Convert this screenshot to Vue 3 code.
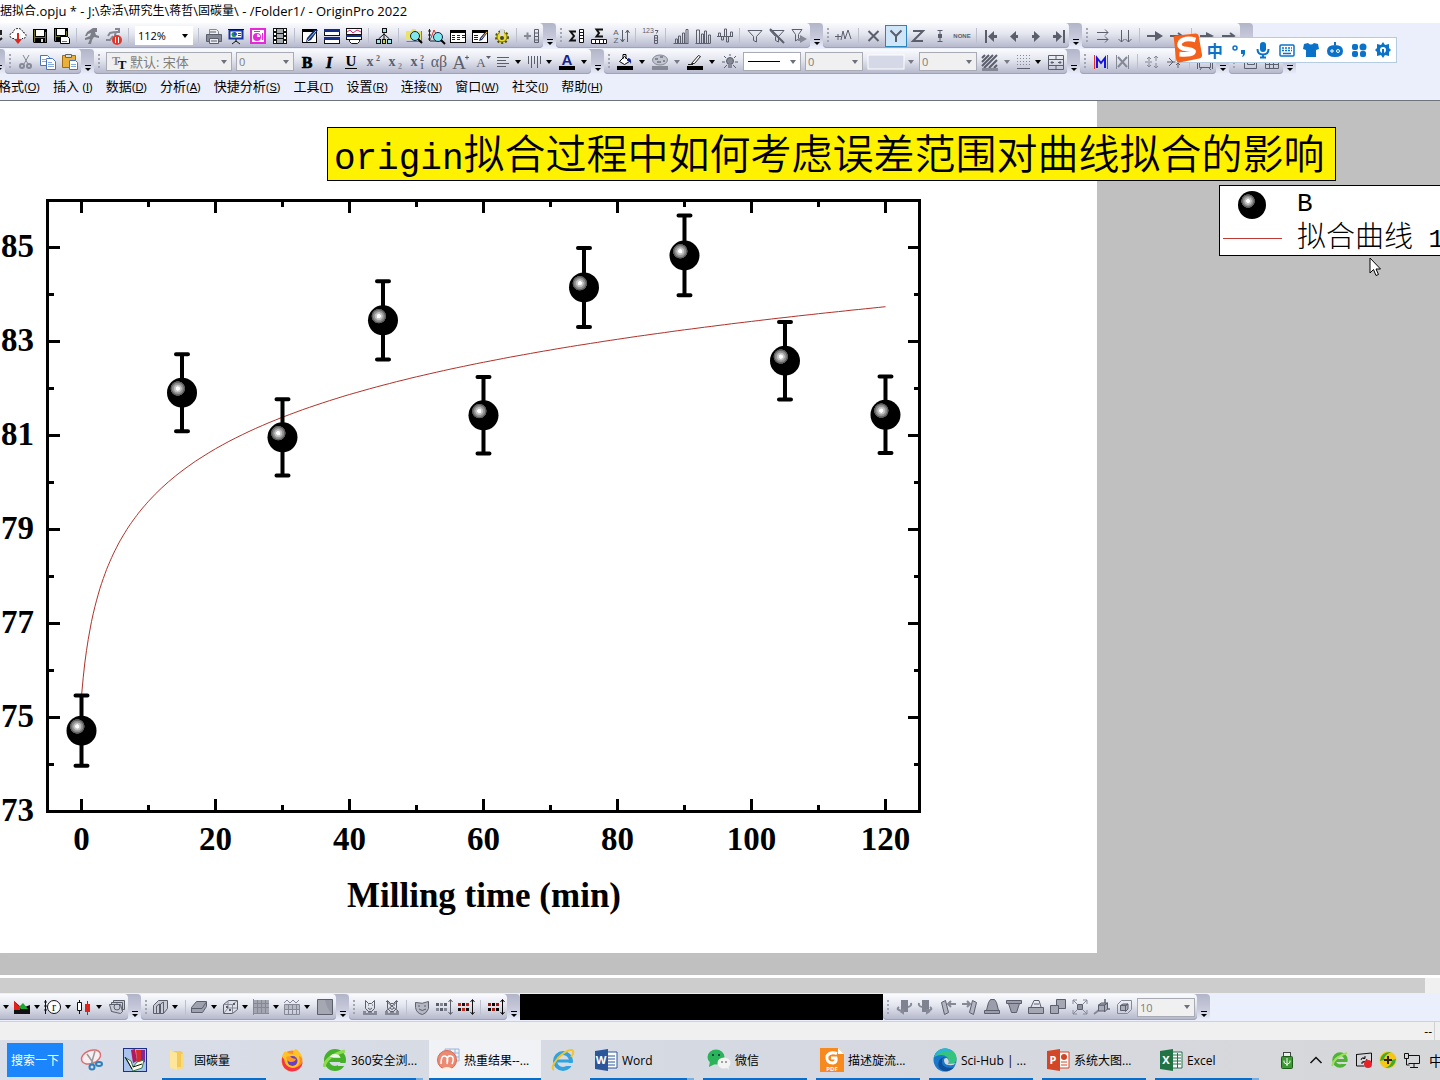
<template>
  <div class="page">
    <header class="titlebar">
      <span v-for="(part, i) in title" :key="i" :class="{ cjk: i % 2 === 0 }">{{ part }}</span>
    </header>

    <div v-for="(row, r) in topRows" :key="r" class="toolbar">
      <div v-for="(group, i) in row" :key="i" class="group" :class="group.cut">
        <div class="group-body">
          <span v-if="!group.cut" class="grip"></span>
          <template v-for="(item, k) in group.items" :key="k">
            <span v-if="item === '|'" class="sep"></span>
            <label v-else-if="item.name" class="combo" :class="item.kind">
              <svg v-if="item.icon" class="combo-icon" viewBox="0 0 18 18" v-html="icons[item.icon]"></svg>
              <select :aria-label="item.name">
                <option>{{ item.select }}</option>
              </select>
              <i class="arrow"></i>
            </label>
            <button v-else-if="item.drop" class="tool drop" :class="item.kind" :aria-label="item.drop">
              <svg viewBox="0 0 18 18" v-html="icons[item.drop]"></svg>
              <i class="arrow"></i>
            </button>
            <button v-else class="tool" :class="{ on: item === 'axisY' }" :aria-label="item">
              <svg viewBox="0 0 18 18" v-html="icons[item]"></svg>
            </button>
          </template>
        </div>
        <button class="cap" aria-label="more"><i></i></button>
      </div>
    </div>

    <nav class="menu">
      <button v-for="m in menus" :key="m[0]">{{ m[0] }}<small>(<u>{{ m[1] }}</u>)</small></button>
    </nav>

    <main class="workspace">
      <svg class="sheet" viewBox="0 0 1097 852">
        <defs>
          <radialGradient id="ball" cx="0.36" cy="0.36" r="0.25">
            <stop offset="0.25" stop-color="#fff" />
            <stop offset="0.3" stop-color="#ccc" />
            <stop offset="0.5" stop-color="#bbb" />
            <stop offset="0.55" stop-color="#999" />
            <stop offset="0.75" stop-color="#888" />
            <stop offset="0.8" stop-color="#666" />
            <stop offset="0.95" stop-color="#555" />
            <stop offset="1" stop-color="#000" />
          </radialGradient>
        </defs>
        <rect width="1097" height="852" fill="#fff" />
        <g stroke="#000" stroke-width="3" fill="none" shape-rendering="crispEdges">
          <rect x="47.5" y="99.5" width="872" height="611" />
          <path :d="ticks" />
        </g>
        <path :d="curve" fill="none" stroke="#b03028" stroke-width="1" />
        <g v-for="p in points" :key="p.x">
          <path :d="p.bar" stroke="#000" stroke-width="4" stroke-linecap="round" fill="none" />
          <circle :cx="p.x" :cy="p.y" r="15" fill="url(#ball)" />
        </g>
        <g class="labels">
          <text v-for="v in yMajor" :key="v" x="34" :y="sy(v) + 10" text-anchor="end">{{ v }}</text>
          <text v-for="v in xMajor" :key="v" :x="sx(v)" y="749" text-anchor="middle">{{ v }}</text>
          <text class="axis-title" x="484" y="806" text-anchor="middle">Milling time (min)</text>
        </g>
      </svg>

      <h1 class="caption"><span>origin</span>拟合过程中如何考虑误差范围对曲线拟合的影响</h1>

      <div class="legend">
        <svg viewBox="0 0 60 30"><circle cx="29" cy="15" r="14" fill="url(#ball)" /></svg>
        <span class="latin">B</span>
        <svg viewBox="0 0 60 30"><path d="M0 15.5H59" stroke="#c03a34" /></svg>
        <span>拟合曲线<span class="latin">&nbsp;1</span></span>
      </div>

      <svg class="cursor" viewBox="0 0 12 20">
        <path d="M1 1V16L4.500 12.500L7 18.500L9.500 17.500L7 12H11.500Z" fill="#fff" stroke="#000" />
      </svg>
    </main>

    <div class="scroll"><div class="thumb"></div></div>

    <div class="toolbar bottom">
      <div v-for="(group, i) in bottomRow" :key="i" class="group" :class="group.cut">
        <template v-if="!group.blank">
          <div class="group-body">
            <span v-if="!group.cut" class="grip"></span>
            <template v-for="(item, k) in group.items" :key="k">
              <span v-if="item === '|'" class="sep"></span>
              <label v-else-if="item.name" class="combo" :class="item.kind">
                <select :aria-label="item.name">
                  <option>{{ item.select }}</option>
                </select>
                <i class="arrow"></i>
              </label>
              <button v-else-if="item.drop" class="tool drop" :aria-label="item.drop">
                <svg viewBox="0 0 18 18" v-html="icons[item.drop]"></svg>
                <i class="arrow"></i>
              </button>
              <button v-else class="tool" :aria-label="item">
                <svg viewBox="0 0 18 18" v-html="icons[item]"></svg>
              </button>
            </template>
          </div>
          <button class="cap" aria-label="more"><i></i></button>
        </template>
        <div v-else class="blank"></div>
      </div>
    </div>

    <div class="status"><span>--</span></div>

    <footer class="taskbar">
      <button class="search">搜索一下</button>
      <button
        v-for="t in tasks"
        :key="t.icon"
        class="task"
        :class="{ labeled: t.text, active: t.active, stack: t.stack }"
        :aria-label="t.icon"
      >
        <svg viewBox="0 0 24 24" v-html="taskIcons[t.icon]"></svg>
        <span v-if="t.text">{{ t.text }}</span>
      </button>
      <div class="tray">
        <button v-for="t in tray" :key="t" :aria-label="t">
          <svg viewBox="0 0 18 18" v-html="trayIcons[t]"></svg>
        </button>
        <button class="lang">中</button>
      </div>
    </footer>

    <div class="ime">
      <svg class="ime-logo" viewBox="0 0 34 32">
        <path d="M3 5Q2 3 5 2.500L26 0Q29 0 29.500 3L33 23Q33 26 30 26.500L9 31Q6 31 5.500 28Z" fill="#f4611c" />
        <path d="M26 7Q15 4 10 9Q7 14 13 16Q23 17 24 19Q24 23 9 22" fill="none" stroke="#fff" stroke-width="5" />
      </svg>
      <button class="zh">中</button>
      <button v-for="n in imeItems" :key="n" :aria-label="n">
        <svg viewBox="0 0 18 18" v-html="imeIcons[n]"></svg>
      </button>
    </div>
  </div>
</template>

<script setup>
// alternating Chinese / Latin runs
const title = [
  '据拟合', '.opju * - J:\\', '杂活', '\\', '研究生', '\\', '蒋哲', '\\', '固碳量',
  '\\ - /Folder1/ - OriginPro 2022',
];

const menus = [
  ['格式', 'O'],
  ['插入 ', 'I'],
  ['数据', 'D'],
  ['分析', 'A'],
  ['快捷分析', 'S'],
  ['工具', 'T'],
  ['设置', 'R'],
  ['连接', 'N'],
  ['窗口', 'W'],
  ['社交', 'I'],
  ['帮助', 'H'],
];

const topRows = [
  [
    {
      cut: 'cut-a',
      items: [
        'refresh', 'cloud', 'save', 'saveAs', '|', 'run', 'runStop', '|',
        { select: '112%', name: 'zoom', kind: 'enabled' }, '|',
        'print', 'present', 'pinkPlot', 'film', '|', 'edit', 'rows', 'plotRows', '|', 'tree', '|',
        'findSheet', 'findPlot', 'table', 'tableEdit', 'gear', '|', 'addCol',
      ],
    },
    {
      items: [
        'sumCol', 'sumRow', 'sortAZ', '|', 'numbers', '|', 'bars1', 'bars2', 'bars3', '|',
        'filter', 'filterOff', 'filterGo',
      ],
    },
    { items: ['addSpike', '|', 'axisX', 'axisY', 'axisZ', 'errorBar', 'none', '|', 'first', 'prev', 'next', 'last'] },
    { items: ['arrowsRight', 'arrowsDown', '|', 'arrowBig', 'arrowThin', '|', 'arrowMid', 'arrowThin'] },
  ],
  [
    { cut: 'cut-b', items: [] },
    { items: ['cut', 'copy', 'paste'] },
    {
      items: [
        { select: '默认: 宋体', name: 'font', kind: 'font', icon: 'fontT' },
        { select: '0', name: 'size' },
        'bold', 'italic', 'underline', 'sup', 'sub', 'supsub', 'greek', 'bigger', 'smaller',
        { drop: 'align' }, { drop: 'spacing' }, { drop: 'fontColor', kind: 'wide' },
      ],
    },
    {
      items: [
        { drop: 'fill', kind: 'wide' }, { drop: 'palette', kind: 'wide dim' }, { drop: 'lineColor', kind: 'wide' }, 'bulb',
        { select: '', name: 'line style', kind: 'line' },
        { select: '0', name: 'line width' },
        { drop: 'swatch', kind: 'swatch dim' },
        { select: '0', name: 'pattern width' },
        { drop: 'hatch', kind: 'wide dim' }, { drop: 'border' }, 'merge',
      ],
    },
    { items: ['markM', 'markX', '|', 'spreadV', 'shrinkV', '|', 'boxed'] },
    { items: ['windowIn', 'gridWin'] },
  ],
];

const bottomRow = [
  {
    cut: 'cut-c',
    items: [{ drop: 'area' }, { drop: 'area' }, { drop: 'polar' }, { drop: 'candle' }, 'layers'],
  },
  { items: [{ drop: 'bars3d' }, '|', { drop: 'surface' }, { drop: 'scatter3d' }, { drop: 'heat' }, { drop: 'profile' }, 'image'] },
  { items: ['mask', 'maskOff', '|', 'face', 'dotsGray', 'dotsRed', '|', 'dotsBlack'] },
  { blank: true },
  {
    items: [
      'rotL', 'rotR', 'tiltL', 'tiltR', 'persp', 'perspDown', 'frameUp', 'cubes', 'fit', 'cubeAxes', 'cubeBox',
      { select: '10', name: 'angle' },
    ],
  },
];

const tasks = [
  { icon: 'snip' },
  { icon: 'books' },
  { icon: 'folder', text: '固碳量' },
  { icon: 'firefox' },
  { icon: 'browser', text: '360安全浏...', stack: true },
  { icon: 'origin', text: '热重结果--...', active: true },
  { icon: 'ie' },
  { icon: 'word', text: 'Word', stack: true },
  { icon: 'wechat', text: '微信' },
  { icon: 'pdf', text: '描述旋流...' },
  { icon: 'edge', text: 'Sci-Hub | ...' },
  { icon: 'ppt', text: '系统大图...' },
  { icon: 'excel', text: 'Excel', stack: true },
];
const tray = ['usb', 'up', 'safe', 'sync', 'guard', 'net'];
const imeItems = ['punct', 'mic', 'keyboard', 'shirt', 'robot', 'apps', 'settings'];

// chart scales
const sx = (v) => 81.5 + v * 6.7;
const sy = (v) => 710.5 - (v - 73) * 47;
const yMajor = [73, 75, 77, 79, 81, 83, 85];
const xMajor = [0, 20, 40, 60, 80, 100, 120];

const data = [
  [0, 74.72], [15, 81.91], [30, 80.96], [45, 83.45], [60, 81.43],
  [75, 84.15], [90, 84.83], [105, 82.59], [120, 81.44],
];

const points = data.map(([t, v]) => {
  const x = sx(t);
  const top = sy(v * 1.01);
  const bottom = sy(v * 0.99);
  return { x, y: sy(v), bar: `M${x} ${top}V${bottom}M${x - 6} ${top}H${x + 6}M${x - 6} ${bottom}H${x + 6}` };
});

let ticks = '';
for (let v = 0; v <= 120; v += 10) {
  const len = v % 20 ? 6 : 12;
  ticks += `M${sx(v)} 710v${-len}M${sx(v)} 100v${len}`;
}
for (let v = 74; v <= 85; v++) {
  const len = v % 2 ? 12 : 6;
  ticks += `M48 ${sy(v)}h${len}M920 ${sy(v)}h${-len}`;
}

let curve = '';
for (let t = 0; t <= 120; t += t < 10 ? 0.25 : 1) {
  curve += `${t ? 'L' : 'M'}${sx(t).toFixed(1)} ${sy(75.46 + 1.7265 * Math.log(t + 1)).toFixed(1)}`;
}

const G = '#858996';
const D = '#5b5f6c';
const line = (d, color = G, w = 1) => `<path d="${d}" fill="none" stroke="${color}" stroke-width="${w}"/>`;
const solid = (d, color = G) => `<path d="${d}" fill="${color}"/>`;
const glyph = (t, size, color, x = 9, y = 14, extra = '') =>
  `<text x="${x}" y="${y}" font-size="${size}" fill="${color}" text-anchor="middle" ${extra}>${t}</text>`;
const serif = 'font-family="Liberation Serif" font-weight="bold"';
const sans = 'font-family="Liberation Sans"';
const sheetIcon = `<rect x="1.500" y="3.500" width="15" height="12" fill="#fff" stroke="#000"/>${solid('M1 3h16v3H1z', '#000')}`;
const floppy = (x, y) =>
  `<g transform="translate(${x} ${y})">${solid('M0 0h14v14H1L0 13z', '#000')}${solid('M3 1h8v6H3z', '#fff')}${solid('M1 1h1v12H1zM12 3h1v10h-1zM2 8h10v1H2z', '#75752a')}${solid('M8 10h2v3H8z', '#ddd')}</g>`;
const lens = (c) =>
  `<circle cx="10" cy="9" r="4.500" fill="#7fe8ee" stroke="${c}"/><path d="M13 12l4 4" stroke="#000" stroke-width="2"/>`;
const cube = (x, y, s) =>
  `<g transform="translate(${x} ${y})" fill="#a9adb9" stroke="${D}"><path d="M.5 ${s / 2}h${s}v${s}h-${s}z"/><path d="M.5 ${s / 2}l${s / 2}-${s / 2 - 1}h${s}l-${s / 2} ${s / 2 - 1}zM${s + 0.5} ${s / 2}l${s / 2}-${s / 2 - 1}v${s}l-${s / 2} ${s / 2}z"/></g>`;
const dots = (a, b) =>
  solid('M1 5h3v3H1zM9 5h3v3H9zM5 10h3v3H5z', a) + solid('M5 5h3v3H5zM1 10h3v3H1zM9 10h3v3H9z', b);
const upDown = (c) => line('M15.500 2v14M13.500 4l2-2.500 2 2.500M13.500 14l2 2.500 2-2.500', c);
const cat = solid('M2 13h3v2h2v-2h4v2h2v-2h3v4H2z') + line('M4.500 2.500v8l3 3h3l3-3v-8l-3 3h-3zM7 7h1M11 7h1M7 10l2 1.500 2-1.500', D);

const icons = {
  refresh: line('M3 7q5-5 11 0M14 3v4h-4M15 11q-5 5-11 0', '#222', 2),
  cloud: `<path d="M5 11.500H4a3 3 0 0 1 0-6q1-4 5-4t5 4a3 3 0 0 1 0 6h-1" fill="#fff" stroke="#222" stroke-dasharray="2 1"/>${line('M9 6v9', '#e0261c', 2)}${solid('M5 12h8l-4 5z', '#e0261c')}`,
  save: floppy(2, 2),
  saveAs: floppy(1, 1) + `<path d="M7.500 9.500h7l2 2v5h-9z" fill="#fff" stroke="#000"/>${solid('M9 14h5v1H9z', '#28c')}`,
  run: solid('M10 1h4v4h-2l1 3 3 1v2l-5-1-2 3-1 4H5l2-5-5 1v-2l5-2 1-3-3 1-1 2H2l2-4z', '#7c7f88'),
  runStop: line('M10 2h4v3h-3l-1 3 2 2M10 5L5 6 3 9M8 9l-3 4H1', G, 2) + `<circle cx="12" cy="13" r="5" fill="#e0382c"/>${solid('M10 10h1v6h-1zM13 10h1v6h-1z', '#fff')}`,
  print: `<path d="M4.500 7V2.500h7l2 2V7" fill="#eee" stroke="${G}"/>` + `<path d="M1.500 7.500h15v7h-15z" fill="#858996" stroke="${D}"/>` + `<path d="M4.500 11.500h9v5h-9z" fill="#e9ebf0" stroke="${D}"/>` + line('M6 14h6M5 5h6', D),
  present: `<path d="M2.500 3.500h13v8h-13z" fill="#fff" stroke="#1633a0" stroke-width="2"/><circle cx="7" cy="7.500" r="2.500" fill="#19963c"/>${solid('M7 5v3h3q0-3-3-3', '#2646d8')}${solid('M11 6h3v1h-3zM11 8h3v1h-3z', '#444')}${line('M9 12v3M5 17l4-3 4 3M1 2.500h16', '#111')}`,
  pinkPlot: `<rect x="2" y="2" width="14" height="14" fill="#fff" stroke="#e629d8" stroke-width="2"/><circle cx="8" cy="10" r="4" fill="#e629d8"/>${solid('M8 7v3h3q0-3-3-3', '#fff')}${line('M5 4.500h6M13.500 6v7', '#e629d8')}`,
  film: solid('M2 1h14v16H2z', '#111') + solid('M6 2h6v4H6zM6 7h6v4H6zM6 12h6v4H6z', '#a8abb0') + solid('M3 2h2v2H3zM3 6h2v2H3zM3 10h2v2H3zM3 14h2v2H3zM13 2h2v2h-2zM13 6h2v2h-2zM13 10h2v2h-2zM13 14h2v2h-2z', '#fff'),
  edit: `<rect x="1.500" y="2.500" width="14" height="13" fill="#fff" stroke="#000"/>` + solid('M1 2h15v3H1z', '#000') + solid('M5 15l1-4 7-8h4l-7 10z', '#162a66') + line('M6 14L15 4', '#8fd0ff'),
  rows: `<g fill="#fff" stroke="#111"><rect x="1.500" y="2.500" width="15" height="6"/><rect x="1.500" y="10.500" width="15" height="6"/></g>` + solid('M1 2h16v3H1zM1 10h16v3H1z', '#162a88'),
  plotRows: `<g fill="#fff" stroke="#111"><rect x="1.500" y="1.500" width="15" height="6"/><rect x="1.500" y="9.500" width="15" height="3"/><path d="M4.500 12.500h10v2l-2 2h-6l-2-2z"/></g>` + line('M2 5l3-2 3 3 4-3 4 2', '#d8286e') + solid('M1 8h16v2H1z', '#162a88'),
  tree: `<g fill="#9de3e8" stroke="#111"><rect x="7.500" y="1.500" width="4" height="4"/><rect x="1.500" y="12.500" width="4" height="4"/><rect x="7.500" y="12.500" width="3" height="4" fill="#c9d63b"/><rect x="12.500" y="12.500" width="4" height="4"/></g>` + line('M9 6v6M9 7L3.500 12M9 7l5.500 5', '#111'),
  findSheet: solid('M1 4h5l1-2h4v2h6v9H1z', '#ece46a') + line('M1.500 14.500h15V4', '#8a8436') + lens('#124'),
  findPlot: line('M2.500 2v12M1 4h3M1 8h3M1 12h3M3 14h12', '#222') + line('M4 11l3-8 3 6', '#d5322a') + `<g transform="translate(1 1)">${lens('#124')}</g>`,
  table: sheetIcon + line('M3 8.500h3M8 8.500h3M13 8.500h3M3 10.500h3M8 10.500h3M13 10.500h3M3 12.500h3M8 12.500h3', '#222'),
  tableEdit: sheetIcon + line('M3 8.500h4M3 10.500h4M3 12.500h4', '#222') + solid('M8 14l1-3 6-7 2 1-6 8z', '#162a66') + line('M10 12l6-7', '#f0c040'),
  gear: `<circle cx="9" cy="10" r="6" fill="#e8dd48" stroke="#514d10" stroke-width="2" stroke-dasharray="2 2"/><circle cx="9" cy="10" r="5" fill="#e8dd30" stroke="#77711d"/><circle cx="9" cy="11" r="2" fill="#444"/>${solid('M7 2h4v7H7z', '#ddd')}`,
  addCol: line('M1 9h7M4.500 5.500v7', G, 2) + line('M11.500 2.500h4v13h-4zM11 6h5M11 9.500h5M11 13h5', D),
  sumCol: line('M8 4.500H2.500L6 9l-3.500 4.500H8', '#111', 2) + `<path d="M11.500 2.500h4v13h-4zM11 5.500h5M11 8.500h5M11 11.500h5" fill="#fff" stroke="#111"/>`,
  sumRow: line('M13 2.500H6.500L9 6l-2.500 3.500H13', '#111', 2) + `<path d="M1.500 12.500h15v4h-15zM5.500 12v4M9.500 12v4M13.500 12v4" fill="#fff" stroke="#111"/>`,
  sortAZ: glyph('A', 8, D, 4, 8, sans) + glyph('Z', 8, D, 4, 16, sans) + line('M10.500 3v12M8.500 12l2 3 2-3M15.500 3v12M13.500 6l2-3 2 3', D),
  numbers: glyph('123', 7, D, 6, 6, sans) + line('M13 3.500h3l-1.500 3M12.500 8.500h3v8h-3zM12 11h4M12 13.500h4', D),
  bars1: line('M1.500 16.500h15M3.500 16v-4h2v4M6.500 16V9h2v7M10.500 16V6h2v10M14 16V2.500h2V16', D),
  bars2: line('M1.500 16.500h15M2.500 16V3h3v13M7.500 16V7h2v9M10.500 16V4h2v12M14.500 16V8h2v8', D),
  bars3: line('M1 9.500h16M2.500 9V6h2v3M5.500 9v4h2V9M8.500 9V2h2v13h2V9M14.500 9V5h2v4', D),
  filter: line('M2 3.500h14l-5.500 6V15l-3-1.500v-4z', D),
  filterOff: line('M2 3.500h14l-5.500 6V15l-3-1.500v-4z', D) + line('M2 2l14 14', D, 2),
  filterGo: line('M2 2.500h10l-3.500 5V12l-3 2V7.500z', D) + solid('M10 8l7 4-7 4v-2H8v-3h2z', G),
  addSpike: line('M0 9.500h6M3 7v6', D) + line('M6 13l2-9 2 8 3-9 3 9', D),
  axisX: line('M3.500 4l10 10M13.500 4l-10 10', D, 2),
  axisY: line('M3.500 3.500L9 9l5.500-5.500M9 9v6', D, 2),
  axisZ: line('M4 4h10L4 14h10', D, 2),
  errorBar: line('M6.500 3.500h5M9 4v10M6.500 14.500h5', D) + solid('M7 7h4v4H7z', D),
  none: glyph('NONE', 6, D, 9, 11, `${sans} font-weight="bold"`),
  first: solid('M2 3h2v13H2zM5 9.500L11 4v4h3v3h-3v4z', D),
  prev: solid('M5 9.500L11 4v4h2v3h-2v4z', D),
  next: solid('M13 9.500L7 4v4H5v3h2v4z', D),
  last: solid('M14 3h2v13h-2zM13 9.500L7 4v4H4v3h3v4z', D),
  arrowsRight: line('M3 5.500h11M11 2.500l3 3-3 3M3 12.500h11M11 9.500l3 3-3 3', D),
  arrowsDown: line('M5.500 3v12M2.500 12l3 3 3-3M12.500 3v12M9.500 12l3 3 3-3', D),
  arrowBig: solid('M1 8h8V4l8 5-8 5v-4H1z', D),
  arrowMid: solid('M2 8h6V5l8 4-8 4v-3H2z', D),
  arrowThin: line('M2 9h12M10 6l4 3-4 3', D, 2),

  cut: line('M6 2l5 9M12 2L7 11', G) + `<g fill="none" stroke="${G}" stroke-width="2"><circle cx="5" cy="13" r="2"/><circle cx="12" cy="13" r="2"/></g>`,
  copy: `<g fill="#fff" stroke="#4a72b8"><path d="M1.500 2.500h7l2 2v8h-9z"/><path d="M7.500 5.500h6l3 3v8h-9z"/></g>` + line('M3 6.500h5M3 8.500h4M9 9.500h4M9 11.500h6M9 13.500h6', '#86a9de'),
  paste: `<path d="M1.500 2.500h13v12h-13z" fill="#e9b13c" stroke="#a06c14"/><path d="M4.500 1.500h6v3h-6z" fill="#ddd" stroke="#666"/><path d="M8.500 7.500h6l2 2v7h-8z" fill="#fff" stroke="#4a72b8"/>` + line('M10 11.500h5M10 13.500h5', '#86a9de'),
  fontT: glyph('T', 12, G, 6, 12, serif) + glyph('T', 13, '#111', 12, 16, serif),
  bold: glyph('B', 16, '#000', 9, 15, 'font-family="Liberation Serif" font-weight="bold" stroke="#000" stroke-width=".6"'),
  italic: glyph('I', 16, '#000', 9, 15, 'font-family="Liberation Serif" font-weight="bold" font-style="italic" stroke="#000" stroke-width=".6"'),
  underline: glyph('U', 15, '#000', 9, 13, serif) + solid('M3 15h12v1H3z', '#000'),
  sup: glyph('x', 14, D, 6, 13, serif) + glyph('2', 8, D, 14, 8, serif),
  sub: glyph('x', 14, D, 6, 13, serif) + glyph('2', 8, G, 14, 16, serif),
  supsub: glyph('x', 14, D, 6, 13, serif) + glyph('2', 8, D, 14, 8, serif) + glyph('1', 8, D, 14, 16, serif),
  greek: glyph('αβ', 16, D, 9, 14, 'font-family="Liberation Serif"'),
  bigger: glyph('A', 19, D, 7, 16, 'font-family="Liberation Serif"') + line('M13 4.500h4M15 2.500v4', D),
  smaller: glyph('A', 13, D, 7, 14, 'font-family="Liberation Serif"') + solid('M12 3h5l-2.500 3z', D),
  align: line('M3 4.500h12M3 7.500h9M3 10.500h12M3 13.500h9', D),
  spacing: line('M3.500 3v8M6.500 3v12M9.500 3v8M12.500 3v12M15.500 3v8', D),
  fontColor: glyph('A', 15, '#14248c', 9, 12, 'font-family="Liberation Sans" font-weight="bold"') + solid('M1 13h16v4H1z', '#000'),
  fill: `<path d="M3.500 8.500l5-5 5 5-5 3z" fill="#fff" stroke="#000"/>` + line('M7 6V1.500h3V6', '#000') + solid('M12 5q4 0 3 6-1-3-4-3z', '#14248c') + solid('M1 13h16v4H1z', '#000'),
  palette: `<ellipse cx="9" cy="7" rx="7.500" ry="5" fill="#c2c5cf" stroke="${G}"/>` + line('M4 6h3M9 4h3M6 9h4M12 8h2', G, 2) + solid('M1 13h16v4H1z'),
  lineColor: `<path d="M5.500 10.500l7-8 2 1-6 7z" fill="#fff" stroke="#222"/>` + line('M2 11.500h5', '#222') + solid('M1 13h16v4H1z', '#000'),
  bulb: `<circle cx="9" cy="8" r="3.500" fill="${G}" stroke="${D}"/>` + solid('M7 11h4v4H7z') + line('M9 1v2M3 3l2 2M15 3l-2 2M1 9h3M14 9h3M3 15l3-3M15 15l-3-3', D),
  swatch: `<rect x="-9" y="2" width="36" height="14" fill="#d5d8e6" stroke="#fff"/>`,
  hatch: line('M1 5l3-3M1 9l7-7M1 13L12 2M3 15L16 2M8 15l8-8M13 15l3-3', D, 2) + solid('M1 15h16v3H1z'),
  border: `<path d="M3.500 2v12M6.500 2v12M9.500 2v12M12.500 2v12M15.500 2v12" stroke="${G}" stroke-dasharray="1 2"/>` + line('M3 15.500h13', D),
  merge: line('M1.500 2.500h15v14h-15zM1 6.500h16M1 12.500h16M9 2v4M9 13v4M4 9.500h3M11 9.500h3M5.500 8L4 9.500 5.500 11M12.500 8l1.500 1.500-1.500 1.500', D),
  markM: line('M2.500 2v14M15.500 2v14', '#e0302a') + line('M5 15V5l4 5 4-5v10', '#1414e0', 2),
  markX: line('M2.500 2v14M14.500 2v14', G) + line('M4 4l9 10M13 4L4 14', G, 2),
  spreadV: line('M5 4v4M5 10v4M3 6l2-2 2 2M3 12l2 2 2-2M12 3v5M12 10v5M10 5l2-2 2 2M10 13l2 2 2-2M1 9h7', G),
  shrinkV: line('M3 5l4 4-4 4M12 3v5M12 10v5M10 6l2 2 2-2M10 12l2-2 2 2M1 9h15', D),
  boxed: line('M3.500 3.500h11v11h-11zM6 14l-2 3M12 14l3 3M1.500 2v14M16.500 2v14', D),
  windowIn: line('M3.500 3.500h12v12h-12zM6.500 8.500h7v3h-7z', D),
  gridWin: line('M2.500 3.500h13v12h-13zM2 7.500h14M2 11.500h14M6.500 4v12M10.500 4v12', D),

  area: solid('M1 3l8 7 8-3v9H1z', '#111') + solid('M1 3l6 6v7H1z', '#e0221a') + solid('M6 9l4-4 5 6H8z', '#1aa832') + solid('M1 12h16v4H1z', '#111'),
  polar: line('M1.500 2v14M0 4h3M0 8h3M0 12h3', '#111') + `<circle cx="10" cy="9" r="6.500" fill="#fff" stroke="#111"/>` + glyph('r', 12, '#111', 10, 13, 'font-family="Liberation Serif"'),
  candle: line('M4.500 2v14', '#111') + `<path d="M2.500 4.500h4v8h-4z" fill="#fff" stroke="#111"/>` + line('M12.500 3v14', '#c4190f') + solid('M10 6h5v8h-5z', '#e2231a'),
  layers: `<g fill="#c9ccd6" stroke="${D}"><path d="M5.500 2.500h11v9h-11z"/><path d="M3.500 4.500h11v9h-11z"/><path d="M1.500 6.500h11l2 7-2 2-9-2z"/></g>` + `<circle cx="9" cy="9" r="3" fill="none" stroke="${D}"/>`,
  bars3d: `<path d="M2.500 7.500l5-5h9v8l-4 5h-10z" fill="#c9ccd6" stroke="${D}"/>` + line('M5.500 15V8l3-2v9M9.500 15V6l3-2v11', D),
  surface: `<path d="M1.500 9.500l5-6h10v5l-4 6h-11z" fill="#9ea2af" stroke="${D}"/>` + line('M2 10.500h10l4-6', D),
  scatter3d: `<path d="M2.500 6.500l5-4h9v9l-5 4h-9z" fill="#dfe1e8" stroke="${D}"/>` + line('M2.500 6.500h9v9M11.500 6.500l5-4M7 3v7l-4 5M7 10h9', G) + solid('M5 8h2v2H5zM8 11h2v2H8zM12 5h2v2h-2z', D),
  heat: solid('M2 2h15v13H2z', '#a3a6b1') + line('M1.500 1v16M1 15.500h16M2 5.500h15M2 9.500h15M5.500 2v13M9.500 2v13M13.500 2v13', G),
  profile: line('M1 5l3-3 3 3 3-3 3 3 3-3', G) + solid('M1 7h16v4H1z', '#b7bac5') + line('M1.500 6.500h15v10h-15zM1 11.500h16M5.500 7v9M9.500 7v9M13.500 7v9', G),
  image: `<path d="M1.500 1.500h15v15h-15z" fill="#a5a8b3" stroke="${D}"/>` + solid('M9 2h7v14q-5-5-7-14z', '#9598a5'),
  mask: cat,
  maskOff: cat + line('M3 3l12 10M15 3L3 13', D),
  face: `<path d="M2.500 4.500q7 2 13-1v7q-2 5-6 6-6-1-7-7z" fill="#b5b8c3" stroke="${D}"/>` + line('M5 8h2M11 8h2M6 11q3 3 7 0', D),
  dotsGray: dots(D, G) + upDown(D),
  dotsRed: dots('#c0261e', '#111') + upDown('#111'),
  dotsBlack: dots('#a01a16', '#000') + upDown('#000'),
  rotL: solid('M6 2h7v12H6z', '#7f8290') + line('M4 9q-4 3 4 4M13 9q4-1 3-4M8 11v4l-3-2', G, 2),
  rotR: solid('M5 2h7v12H5z', '#7f8290') + line('M13 9q4 3-4 4M5 9q-4-1-3-4M10 11v4l3-2', G, 2),
  tiltL: `<path d="M2.500 4.500l4-2 3 12-4 2z" fill="#b3b6c2" stroke="${D}"/>` + line('M9 6h8M12 3L9 6l3 3', G, 2),
  tiltR: `<path d="M15.500 4.500l-4-2-3 12 4 2z" fill="#b3b6c2" stroke="${D}"/>` + line('M1 6h8M6 3l3 3-3 3', G, 2),
  persp: `<path d="M5.500 4.500l2-3h4l2 3 2 8h-12zM1.500 12.500h15v3h-15z" fill="#9b9eaa" stroke="${D}"/>`,
  perspDown: `<path d="M1.500 2.500h15v3h-15zM3.500 5.500h11l-3 9h-5z" fill="#9b9eaa" stroke="${D}"/>`,
  frameUp: line('M4 9l3-6.500h5L14 9M7 6h5', D) + `<path d="M1.500 9.500h15v6h-15z" fill="#a5a8b3" stroke="${D}"/>`,
  cubes: `<g fill="#a5a8b3" stroke="${D}"><path d="M7.500 1.500h9v9h-9z"/><path d="M1.500 7.500h8v8h-8z"/></g>`,
  fit: line('M2 2l4 4M16 2l-4 4M2 16l4-4M16 16l-4-4M2 6V2h4M12 2h4v4M2 12v4h4M12 16h4v-4', G) + `<path d="M6.500 6.500h5v5h-5z" fill="#8d909d" stroke="${D}"/>`,
  cubeAxes: line('M12 1v5M1 16l5-4M12 11h5', G, 2) + cube(5, 4, 6),
  cubeBox: line('M2.500 6.500l4-4h10v9l-4 4h-10z', G) + cube(5, 5, 5),
};

const office = (letter, color, extra) =>
  `<path d="M12 4h11v16H12z" fill="#fff" stroke="${color}"/>${extra}<path d="M1 3l13-2v22L1 21z" fill="${color}"/><text x="7" y="16" font-family="Open Sans" font-weight="bold" font-size="11" fill="#fff" text-anchor="middle">${letter}</text>`;

const taskIcons = {
  snip: `<ellipse cx="12" cy="9" rx="10" ry="6.500" fill="#f6eef0" stroke="#dc6d72" stroke-width="1.500" transform="rotate(-22 12 9)"/><path d="M8 6l7 10M16 3l-4 14" stroke="#999" stroke-width="1.500"/><g fill="none" stroke="#2f7fbc" stroke-width="2"><circle cx="13" cy="19" r="2.500"/><ellipse cx="20" cy="16" rx="3" ry="2"/></g>`,
  books: `<rect x="0.500" y="0.500" width="23" height="23" fill="#a8c4ee" stroke="#1d2f88"/><path d="M8 2l4-1 2 12-4 2z" fill="#b01860"/><path d="M13 2h5v13h-4z" fill="#d82a2a"/><path d="M18 2h4v12l-4 1z" fill="#7a2a9a"/><path d="M3 10l5 3 2 6 4-5 7-2-2 8-9 3z" fill="#fdfbe8" stroke="#375"/><path d="M2 9l7 12M10 19l9-3" stroke="#111"/>`,
  folder: `<path d="M6 3h9l2 2v15H6z" fill="#f5c955"/><path d="M4 2l7 3v17l-7-2z" fill="#fde59c"/><path d="M15 6h3v14l-7 2v-3h4z" fill="#fbdb82"/>`,
  firefox: `<circle cx="12" cy="13" r="10.500" fill="#ff8a1f"/><path d="M2 9Q4 2 7 4Q9 6 13 6Q13 2 16 1Q22 5 23 13Q22 9 19 8Q22 18 13 20Q5 20 4 12Z" fill="#ffc229"/><path d="M2 9Q1 22 12 23.500Q21 23 23 14Q19 20 12 20Q5 19 4 11Z" fill="#f5344a"/><circle cx="12.500" cy="13" r="5" fill="#6b3fc4"/><path d="M6 9q4-2 6 1l4 1q-1 3-5 3-4 0-5-5" fill="#ff9a22"/>`,
  browser: `<circle cx="12" cy="12" r="8.500" fill="none" stroke="#45b02a" stroke-width="5"/><path d="M5 12h14" stroke="#45b02a" stroke-width="4"/><path d="M15 15h8v3h-8z" fill="#d9dce4"/><path d="M1 19Q3 8 22 3" fill="none" stroke="#8fdc4c" stroke-width="3"/><path d="M7 9q1-3 5-3t5 3z" fill="#eef7ec"/>`,
  origin: `<path d="M9 1h14v12H9z" fill="#eef3fa" stroke="#9bb4d8"/><path d="M9 5h14M9 9h14M14 1v12M19 1v12" stroke="#9bb4d8"/><circle cx="11" cy="12" r="9.500" fill="#ec8a74" stroke="#d56a55"/><path d="M5 16q0-9 4-8t2 8M11 14q0-7 4-6t1 8" fill="none" stroke="#fff" stroke-width="1.500"/><path d="M3 23q8-8 16 0z" fill="#fff0e8"/>`,
  ie: `<circle cx="12" cy="13" r="8" fill="none" stroke="#2ea3df" stroke-width="4"/><path d="M5 13h15" stroke="#2ea3df" stroke-width="3"/><path d="M14 15h8v3h-8z" fill="#d6d9e2"/><path d="M3 22Q-1 20 7 10Q16 1 21 2Q24 4 20 9" fill="none" stroke="#f3c32c" stroke-width="2"/>`,
  word: office('W', '#2b579a', '<path d="M14 8h7M14 11h7M14 14h7M14 17h7" stroke="#2b579a"/>'),
  wechat: `<ellipse cx="9" cy="9" rx="8.500" ry="7.500" fill="#2bb35a"/><path d="M3 13l-1 6 6-3z" fill="#2bb35a"/><circle cx="6" cy="7" r="1" fill="#124"/><circle cx="12" cy="7" r="1" fill="#124"/><ellipse cx="17" cy="15" rx="6.500" ry="5.500" fill="#f3f3f3"/><path d="M19 19l3 3-1-5z" fill="#f3f3f3"/><circle cx="15" cy="14" r="1" fill="#888"/><circle cx="19" cy="14" r="1" fill="#888"/>`,
  pdf: `<path d="M0 0h18l6 6v18H0z" fill="#f68a1e"/><path d="M18 0v6h6z" fill="#fff"/><path d="M17 5.500Q10 3 7 8Q6 15 13 15Q17 14 16 10H11" fill="none" stroke="#fff" stroke-width="3"/><text x="12" y="23" font-family="Open Sans" font-weight="bold" font-size="6" fill="#fff" text-anchor="middle">PDF</text>`,
  edge: `<circle cx="12" cy="12" r="11.500" fill="#1679c9"/><path d="M1 9Q4 0 13 .5Q24 2 23.500 12Q22 17 15 16Q17 12 14 9Q9 5 1 9Z" fill="#35c47d"/><path d="M1 9Q4 0 13 .5Q18 1 20 4Q10 1 1 9Z" fill="#2ab4d8"/><path d="M9 12Q8 20 18 20Q21 20 22 18Q18 24 11 23Q3 20 6 13Q8 9 13 9Q9 10 9 12Z" fill="#114e9b"/><path d="M11 12q0 5 5 5 4 1 7-2-4 1-8 1 2-3-1-6-3 0-3 2z" fill="#d6d9e2"/>`,
  ppt: office('P', '#d24726', '<circle cx="18" cy="9" r="3" fill="#d24726"/><path d="M15 14h6M15 17h6" stroke="#d24726"/>'),
  excel: office('X', '#217346', '<path d="M14 7h8M14 10h8M14 13h8M14 16h8M18.500 5v15" stroke="#217346"/>'),
};

const trayIcons = {
  usb: `<rect x="5.500" y="1.500" width="7" height="4" fill="#eee" stroke="#444"/><rect x="3.500" y="5.500" width="11" height="12" rx="1" fill="#3c9a32" stroke="#1f5c1b"/><path d="M9 15V7M6 9.500v2l3 2 3-2v-2" fill="none" stroke="#fff"/>`,
  up: line('M3.500 12L9 6.500l5.500 5.500', '#111', 1.5),
  safe: `<circle cx="9" cy="9" r="6" fill="none" stroke="#4fb436" stroke-width="3.500"/><path d="M4 9.500h10" stroke="#4fb436" stroke-width="3"/><path d="M11 11h6v2h-6z" fill="#d9dbe0"/><path d="M1 15Q3 6 16 2" fill="none" stroke="#9be25a" stroke-width="2"/>`,
  sync: line('M1.500 3.500L16.500 2v10M1.500 3v12h8', '#111', 1) + line('M6 9q0-3 4-2M10 5v2.500H8M12 8q0 3-4 3M7 13v-2h2', '#111', 1) + `<circle cx="13" cy="13" r="4" fill="#e8222a"/>`,
  guard: `<circle cx="9" cy="9" r="8.500" fill="#f7c710"/><path d="M1 10Q2 1 12 1Q5 4 5 9ZM17 8Q16 17 6 17Q13 14 13 9Z" fill="#3fa936"/><path d="M9 5v8M5 9h8" stroke="#222" stroke-width="2"/>`,
  net: line('M5.500 4.500h11v8h-11M11 13v3M7 16.500h8M1.500 2.500h4v5h-4zM3.500 8v6h3', '#111', 1),
};

const B = '#0b72c9';
const imeIcons = {
  punct: `<circle cx="5" cy="7" r="2" fill="none" stroke="${B}" stroke-width="1.500"/>` + solid('M11 9h4v3q0 3-3 4 1-2 1-3h-2z', B),
  mic: `<rect x="6" y="1" width="6" height="10" rx="3" fill="${B}"/>` + line('M3.500 8q0 5.500 5.500 5.500T14.500 8M9 13v4M6 16.500h6', B, 2),
  keyboard: `<rect x="2" y="4" width="14" height="11" rx="1" fill="#fff" stroke="${B}" stroke-width="1.500"/>` + line('M4 7h2M7 7h2M10 7h2M13 7h1M4 9.500h2M7 9.500h2M10 9.500h2M13 9.500h1M5 12.500h8', B, 1.5),
  shirt: solid('M2 3l4-1q3 3 6 0l4 1 1 5-3 1v7H4V9L1 8z', B),
  robot: solid('M9 4q8 0 8 6t-8 6-8-6 8-6M8 1h2v3H8z', B) + line('M4 10h4M6 8v4', '#fff', 1) + `<circle cx="12" cy="10" r="1.500" fill="none" stroke="#fff"/>`,
  apps: `<g fill="${B}"><rect x="2" y="3" width="6" height="6" rx="2"/><circle cx="13" cy="6" r="3.500"/><rect x="2" y="10" width="6" height="6" rx="2"/><rect x="10" y="10" width="6" height="6" rx="2"/></g>`,
  settings: `<path d="M9 1l2 3 4-1v4l2 2-2 2v4l-4-1-2 3-2-3-4 1v-4L1 9l2-2V3l4 1z" fill="${B}"/><circle cx="9" cy="9" r="3" fill="#fff"/>` + line('M9 8v7', B, 2),
};
</script>

<style>
body {
  margin: 0;
}
</style>

<style scoped>
.page {
  position: relative;
  display: flex;
  flex-direction: column;
  min-height: 100vh;
  overflow: hidden;
  background: #ebeffc;
  color: #000;
  font-family: "Open Sans", "Noto Sans CJK SC", sans-serif;
  font-size: 12px;
}
button {
  padding: 0;
  border: 0;
  background: none;
  color: inherit;
  font: inherit;
}
svg {
  display: block;
  flex: none;
}
.titlebar {
  display: flex;
  height: 23px;
  line-height: 22px;
  background: #fff;
  font-size: 13px;
  white-space: pre;
}
.titlebar .cjk {
  font-size: 12px;
}

/* toolbars */
.toolbar {
  display: flex;
  height: 26px;
}
.toolbar.bottom {
  height: 27px;
  padding-top: 1px;
  border-bottom: 1px solid #c9d2e2;
}
.group {
  display: flex;
  flex: none;
  height: 25px;
  border-radius: 0 4px 0 0;
  background: linear-gradient(#b2b5c8, #c9cbdc 60%, #ebeffc);
}
.bottom .group {
  height: 26px;
}
.cut-a {
  margin-left: -15px;
}
.cut-b {
  margin-left: -8px;
}
.cut-c {
  margin-left: -18px;
}
.group-body {
  display: flex;
  align-items: center;
  border-radius: 0 4px 4px 4px;
  background: linear-gradient(#fafbfe, #e6e8f1 40%, #b3b6ca);
  box-shadow: inset 0 -1px #9fa2b8;
}
.grip {
  width: 2px;
  height: 15px;
  margin: 0 4px;
  background: repeating-linear-gradient(#a2a5b4 0 2px, transparent 2px 4px);
}
.sep {
  width: 1px;
  height: 15px;
  margin: 0 4px 0 3px;
  background: #bcc0ce;
}
.tool {
  display: flex;
  align-items: center;
  justify-content: center;
  width: 22px;
  height: 22px;
}
.tool svg {
  width: 18px;
  height: 18px;
  overflow: visible;
}
.tool.on {
  background: #cfe6f8;
  box-shadow: inset 0 0 0 1px #2a84bd;
}
.tool.drop {
  justify-content: flex-start;
  width: 31px;
  gap: 3px;
}
.tool.wide {
  width: 35px;
  gap: 5px;
  padding-left: 2px;
}
.tool.swatch {
  width: 52px;
  gap: 4px;
  padding-left: 3px;
}
.swatch svg {
  width: 36px;
}
.arrow {
  flex: none;
  width: 0;
  border: 3px solid transparent;
  border-top: 4px solid #000;
  border-bottom: 0;
}
.dim .arrow {
  border-top-color: #777a86;
}
.combo {
  position: relative;
  display: flex;
  align-items: center;
  box-sizing: border-box;
  width: 58px;
  height: 19px;
  margin: 0 2px;
  border: 1px solid #a8abb3;
  background: #f0f0f0;
  color: #7d7d7d;
}
.combo select {
  width: 100%;
  padding: 0 2px;
  border: 0;
  appearance: none;
  background: none;
  color: inherit;
  font-family: inherit;
  font-size: 11px;
}
.combo .arrow {
  position: absolute;
  right: 4px;
  border-top-color: #6d707c;
}
.combo.enabled {
  border-color: #fff;
  background: #fff;
  color: #000;
}
.combo.enabled .arrow {
  border-top-color: #000;
}
.combo.font {
  width: 126px;
}
.combo.font select {
  font-size: 13px;
}
.combo-icon {
  width: 18px;
  height: 18px;
  margin-left: 3px;
}
.combo.line {
  background: #fff;
}
.combo.line select {
  height: 1px;
  margin: 0 20px 0 4px;
  background: #000;
}
.cap {
  display: flex;
  align-items: flex-end;
  justify-content: center;
  width: 13px;
  padding-bottom: 3px;
}
.cap i {
  position: relative;
  width: 0;
  border: 3px solid transparent;
  border-top: 3px solid #000;
  border-bottom: 0;
}
.cap i::before {
  content: "";
  position: absolute;
  left: -3px;
  top: -6px;
  width: 6px;
  height: 1px;
  background: #000;
}
.blank {
  width: 363px;
  background: #000;
}

.menu {
  display: flex;
  gap: 13px;
  height: 21px;
  padding-bottom: 4px;
  border-bottom: 1px solid #70737d;
  margin-left: -2px;
  font-size: 13px;
}
.menu button {
  white-space: pre;
}
.menu small {
  font-family: "Liberation Sans", sans-serif;
  font-size: 11px;
}

/* graph window */
.workspace {
  position: relative;
  flex: 1;
  background: #c0c0c0;
}
.sheet {
  width: 76.18%;
}
.labels {
  font: bold 33px "Liberation Serif", serif;
}
.axis-title {
  font-size: 35px;
}
.caption {
  position: absolute;
  left: 22.7%;
  top: 26px;
  height: 52px;
  margin: 0;
  padding: 0 10px 0 6px;
  border: 1px solid #000;
  background: #fff200;
  font-family: "Noto Sans CJK SC", sans-serif;
  font-size: 41px;
  font-weight: 350;
  line-height: 46px;
  white-space: nowrap;
}
.caption span {
  font-family: "Liberation Mono", monospace;
  font-size: 36px;
}
.legend {
  position: absolute;
  left: 84.65%;
  top: 84px;
  display: grid;
  grid-template-columns: 60px auto;
  grid-auto-rows: 33px;
  column-gap: 14px;
  align-items: center;
  padding: 2px 8px 1px 3px;
  border: 1px solid #000;
  background: #fff;
  font-family: "Noto Sans CJK SC", sans-serif;
  font-size: 29px;
  font-weight: 300;
  line-height: 33px;
  white-space: nowrap;
}
.legend svg {
  width: 60px;
  height: 30px;
}
.latin {
  font-family: "Liberation Mono", monospace;
  font-size: 26px;
}
.cursor {
  position: absolute;
  left: 95.1%;
  top: 156px;
  width: 12px;
  height: 20px;
}

.scroll {
  height: 15px;
  border-top: 3px solid #fff;
  background: #f0f0f0;
}
.thumb {
  height: 100%;
  margin-right: 15px;
  background: #cdcdcd;
}
.status {
  display: flex;
  justify-content: flex-end;
  height: 18px;
  padding-right: 5px;
  background: #f0f0f0;
  line-height: 20px;
}
.status span {
  padding-right: 2px;
  border-right: 1px solid #d0d0d0;
}

/* taskbar */
.taskbar {
  display: flex;
  align-items: center;
  height: 40px;
  background: linear-gradient(90deg, #d9dee8, #d5d9e2 50%, #d6d7d9);
}
.search {
  flex: none;
  width: 56px;
  height: 34px;
  margin: 0 6px 0 7px;
  background: #1b86fb;
  color: #fff;
}
.task {
  display: flex;
  flex: none;
  align-items: center;
  justify-content: center;
  box-sizing: border-box;
  width: 44px;
  height: 40px;
  white-space: nowrap;
}
.task svg {
  width: 24px;
  height: 24px;
}
.task.labeled {
  justify-content: flex-start;
  gap: 4px;
  width: 104px;
  margin: 0 4px 0 5px;
  padding: 2px 0 0 4px;
  border-bottom: 2px solid #0d6cc4;
}
.task.stack {
  border-image: linear-gradient(90deg, #0d6cc4 92%, #7aaede 92%) 2;
}
.task.active {
  width: 112px;
  margin: 0 0 0 2px;
  padding-left: 7px;
  background: #f0f2f6;
}
.tray {
  display: flex;
  flex: none;
  align-items: center;
  margin: 0 -8px 0 auto;
}
.tray button {
  display: flex;
  justify-content: center;
  width: 24px;
}
.tray button:first-child {
  margin-right: 5px;
}
.tray svg {
  width: 18px;
  height: 18px;
}
.tray .lang {
  font-size: 14px;
}

.ime {
  position: absolute;
  right: 3%;
  top: 37px;
  display: flex;
  align-items: center;
  box-sizing: border-box;
  height: 26px;
  padding-right: 1px;
  border: 1px solid #b4cbe0;
  background: #fff;
  color: #0b72c9;
}
.ime-logo {
  width: 32px;
  height: 31px;
  margin: -4px 0 0 -5px;
}
.ime button {
  display: flex;
  justify-content: center;
  width: 24px;
}
.ime button svg {
  width: 18px;
  height: 18px;
}
.ime .zh {
  font-size: 16px;
  font-weight: 700;
}
</style>
